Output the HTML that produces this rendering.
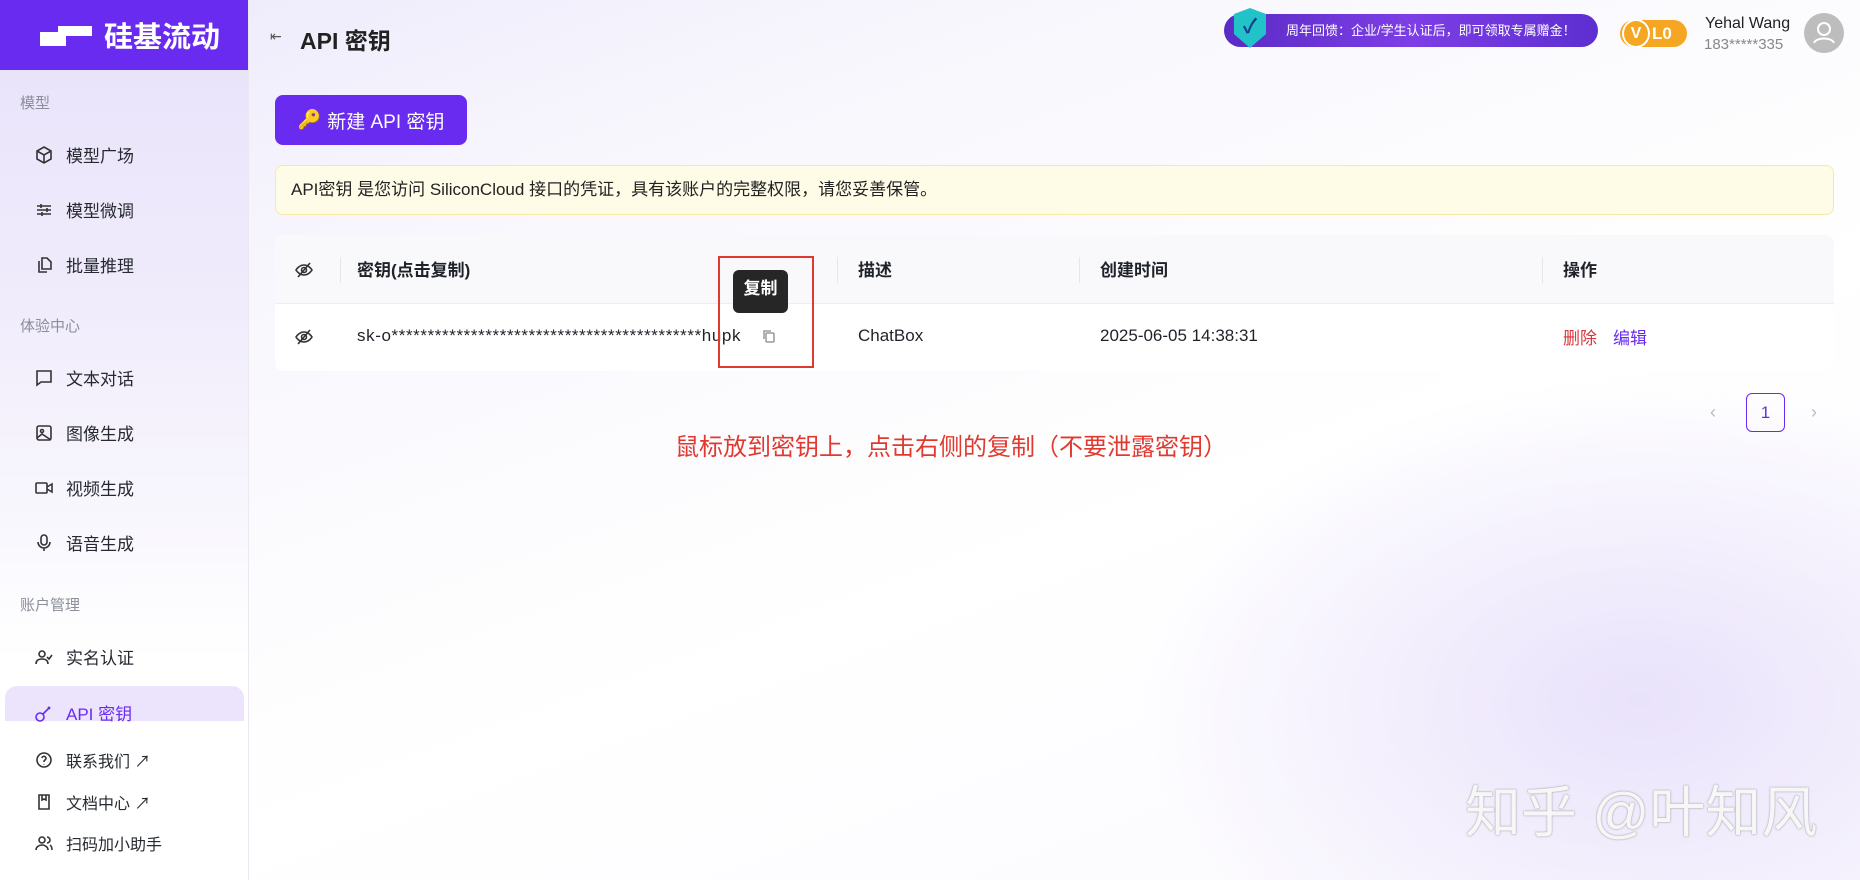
<!DOCTYPE html>
<html><head><meta charset="utf-8"><style>
*{margin:0;padding:0;box-sizing:border-box}
body{width:1860px;height:880px;overflow:hidden;position:relative;font-family:"Liberation Sans","Noto Sans CJK SC",sans-serif;color:#1f2329;
background:radial-gradient(ellipse 500px 320px at 1640px 700px,#e9e2fb 0%,rgba(240,236,252,0) 100%),linear-gradient(160deg,#ece9fb 0%,#f8f7fd 25%,#fcfcfe 45%,#fff 60%,#faf8fe 100%)}
.sb{position:absolute;left:0;top:0;width:249px;height:880px;background:linear-gradient(180deg,#e8e2fb 0%,#efeafb 30%,#f7f5fd 55%,#fff 75%);border-right:1px solid #ebe8f2}
.logo{height:70px;background:#6a2bf0;display:flex;align-items:center;padding-left:40px;color:#fff;font-size:29px;font-weight:bold;gap:12px}
.sec{position:absolute;left:20px;font-size:15px;color:#8a8f99}
.it{position:absolute;left:34px;display:flex;align-items:center;font-size:17px;color:#262a30;gap:12px}
.it svg{width:20px;height:20px;fill:none;stroke:#333;stroke-width:1.6}
.hl{position:absolute;left:5px;top:686px;width:239px;height:35px;background:#ece3fd;border-radius:12px 12px 0 0}
.title{position:absolute;left:300px;top:22px;font-size:23px;font-weight:bold;color:#222}
.btn{position:absolute;left:275px;top:95px;width:192px;height:50px;background:#6a2bf0;border-radius:8px;color:#fff;font-size:19px;display:flex;align-items:center;justify-content:center;gap:6px}
.alert{position:absolute;left:275px;top:165px;width:1559px;height:50px;background:#fefbe6;border:1px solid #f6e9a8;border-radius:8px;font-size:17px;padding-left:15px;line-height:48px;color:#222}
.tbl{position:absolute;left:275px;top:235px;width:1559px;height:136px;background:#fff;border-radius:8px}
.hd{position:absolute;left:0;top:0;width:100%;height:69px;background:#f9f9fb;border-bottom:1px solid #eee;border-radius:8px 8px 0 0}
.c{position:absolute;font-size:17px}
.dv{position:absolute;top:22px;width:1px;height:26px;background:#e6e6ea}
</style></head><body>
<div class="sb">
<div class="logo"><svg width="52" height="26" viewBox="0 0 52 26"><path d="M0 10h18v-6h34v10H26v10H0z" fill="#fff"/></svg>硅基流动</div>
<div class="sec" style="top:92px">模型</div>
<div class="it" style="top:142px"><svg viewBox="0 0 20 20"><path d="M10 2l7 4v8l-7 4-7-4V6z M3 6l7 4 7-4 M10 10v8"/></svg>模型广场</div>
<div class="it" style="top:197px"><svg viewBox="0 0 20 20"><path d="M3 6h14M3 10h14M3 14h14M7 4v4M13 8v4M8 12v4"/></svg>模型微调</div>
<div class="it" style="top:252px"><svg viewBox="0 0 20 20"><path d="M8 3h5l4 4v7H8z M5 6v11h8"/></svg>批量推理</div>
<div class="sec" style="top:315px">体验中心</div>
<div class="it" style="top:365px"><svg viewBox="0 0 20 20"><path d="M3 3h14v11H7l-4 3z"/></svg>文本对话</div>
<div class="it" style="top:420px"><svg viewBox="0 0 20 20"><rect x="3" y="3" width="14" height="14" rx="2"/><circle cx="8" cy="8" r="1.5"/><path d="M3 15l5-4 9 6"/></svg>图像生成</div>
<div class="it" style="top:475px"><svg viewBox="0 0 20 20"><rect x="2" y="5" width="11" height="10" rx="1"/><path d="M13 9l5-3v8l-5-3"/></svg>视频生成</div>
<div class="it" style="top:530px"><svg viewBox="0 0 20 20"><rect x="7" y="2" width="6" height="10" rx="3"/><path d="M4 9a6 6 0 0012 0M10 15v3"/></svg>语音生成</div>
<div class="sec" style="top:594px">账户管理</div>
<div class="it" style="top:644px"><svg viewBox="0 0 20 20"><circle cx="8" cy="7" r="3"/><path d="M2 17c0-4 3-5 6-5s6 1 6 5M13 10l2 2 3-4"/></svg>实名认证</div>
<div class="hl"></div>
<div class="it" style="top:700px;color:#6a2bf0"><svg viewBox="0 0 20 20" style="stroke:#6a2bf0"><circle cx="6" cy="14" r="4"/><path d="M9 11l7-7M14 4l2 2"/></svg>API 密钥</div>
<div class="it" style="top:748px;font-size:16px"><svg viewBox="0 0 20 20"><circle cx="10" cy="10" r="7"/><path d="M8 8a2 2 0 113 2c-1 .5-1 1-1 2M10 14v.5"/></svg>联系我们 ↗</div>
<div class="it" style="top:790px;font-size:16px"><svg viewBox="0 0 20 20"><path d="M5 3h10v14H5z M8 3v5l2-1 2 1V3"/></svg>文档中心 ↗</div>
<div class="it" style="top:831px;font-size:16px"><svg viewBox="0 0 20 20"><circle cx="8" cy="7" r="3"/><path d="M2 17c0-3 3-5 6-5s6 2 6 5M13 4a3 3 0 010 6M16 12c1.5 1 2 3 2 5"/></svg>扫码加小助手</div>
</div>
<div style="position:absolute;left:270px;top:28px;font-size:14px;color:#555">⇤</div>
<div class="title">API 密钥</div>
<div style="position:absolute;left:1224px;top:14px;width:374px;height:33px;border-radius:17px;background:linear-gradient(90deg,#5a2bc4,#7d3ee6,#5d2ed0);color:#fff;font-size:13px;line-height:33px;padding-left:62px">周年回馈：企业/学生认证后，即可领取专属赠金！</div>
<div style="position:absolute;left:1234px;top:8px;width:32px;height:40px;background:#22c3c8;clip-path:polygon(50% 0,100% 15%,100% 65%,50% 100%,0 65%,0 15%);color:#1a3f8a;font-weight:bold;text-align:center;line-height:38px;font-size:20px">✓</div>
<div style="position:absolute;left:1620px;top:20px;width:67px;height:27px;border-radius:14px;background:#f5a623;color:#fff;font-weight:bold;font-size:17px;line-height:27px;padding-left:32px">L0</div>
<div style="position:absolute;left:1622px;top:19px;width:28px;height:29px;background:#f5a623;border:2px solid #fff;border-radius:50%;color:#fff;font-weight:bold;text-align:center;line-height:25px;font-size:16px">V</div>
<div style="position:absolute;left:1705px;top:15px;font-size:16px;color:#222">Yehal Wang</div>
<div style="position:absolute;left:1704px;top:36px;font-size:15px;color:#888">183*****335</div>
<div style="position:absolute;left:1804px;top:13px;width:40px;height:40px;border-radius:50%;background:#bdbdbd"><svg width="40" height="40" viewBox="0 0 40 40" fill="none" stroke="#fff" stroke-width="2"><circle cx="20" cy="16" r="6"/><path d="M10 30c2-6 18-6 20 0"/></svg></div>
<div class="btn"><span>🔑</span>新建 API 密钥</div>
<div class="alert">API密钥 是您访问 SiliconCloud 接口的凭证，具有该账户的完整权限，请您妥善保管。</div>
<div class="tbl">
<div class="hd"></div>
<svg style="position:absolute;left:20px;top:26px" width="18" height="18" viewBox="0 0 18 18" fill="none" stroke="#333" stroke-width="1.6"><path d="M1 9s3-5 8-5 8 5 8 5-3 5-8 5-8-5-8-5z"/><circle cx="9" cy="9" r="2.5"/><path d="M3 16L15 2"/></svg>
<svg style="position:absolute;left:20px;top:93px" width="18" height="18" viewBox="0 0 18 18" fill="none" stroke="#333" stroke-width="1.6"><path d="M1 9s3-5 8-5 8 5 8 5-3 5-8 5-8-5-8-5z"/><circle cx="9" cy="9" r="2.5"/><path d="M3 16L15 2"/></svg>
<div class="dv" style="left:65px"></div><div class="dv" style="left:562px"></div><div class="dv" style="left:804px"></div><div class="dv" style="left:1267px"></div>
<div class="c" style="left:82px;top:21px;font-weight:bold">密钥(点击复制)</div>
<div class="c" style="left:583px;top:21px;font-weight:bold">描述</div>
<div class="c" style="left:825px;top:21px;font-weight:bold">创建时间</div>
<div class="c" style="left:1288px;top:21px;font-weight:bold">操作</div>
<div class="c" style="left:82px;top:91px;letter-spacing:0.6px">sk-o*******************************************hupk</div>
<svg style="position:absolute;left:486px;top:93px" width="16" height="16" viewBox="0 0 16 16" fill="none" stroke="#888" stroke-width="1.3"><rect x="5" y="5" width="8" height="9" rx="1"/><path d="M3 11V3h7"/></svg>
<div class="c" style="left:583px;top:91px">ChatBox</div>
<div class="c" style="left:825px;top:91px">2025-06-05 14:38:31</div>
<div class="c" style="left:1288px;top:89px;color:#d9363e">删除</div>
<div class="c" style="left:1338px;top:89px;color:#6a2bf0">编辑</div>
</div>
<div style="position:absolute;left:733px;top:270px;width:55px;height:43px;background:#262626;border-radius:6px;color:#fff;font-size:17px;font-weight:bold;text-align:center;line-height:38px">复制</div>
<div style="position:absolute;left:754px;top:306px;border:6px solid transparent;border-top-color:#262626"></div>
<div style="position:absolute;left:718px;top:256px;width:96px;height:112px;border:2px solid #e03a30"></div>
<div style="position:absolute;left:1710px;top:402px;font-size:18px;color:#bbb">‹</div>
<div style="position:absolute;left:1746px;top:393px;width:39px;height:39px;border:1px solid #6a2bf0;border-radius:6px;color:#6a2bf0;text-align:center;line-height:37px;font-size:17px">1</div>
<div style="position:absolute;left:1811px;top:402px;font-size:18px;color:#bbb">›</div>
<div style="position:absolute;left:675px;top:427px;font-size:24px;color:#e03a30">鼠标放到密钥上，点击右侧的复制（不要泄露密钥）</div>
<div style="position:absolute;left:1465px;top:768px;font-size:56px;color:rgba(255,255,255,0.9);text-shadow:0 0 2px #aaa,0 0 1px #999">知乎 @叶知风</div>
</body></html>
